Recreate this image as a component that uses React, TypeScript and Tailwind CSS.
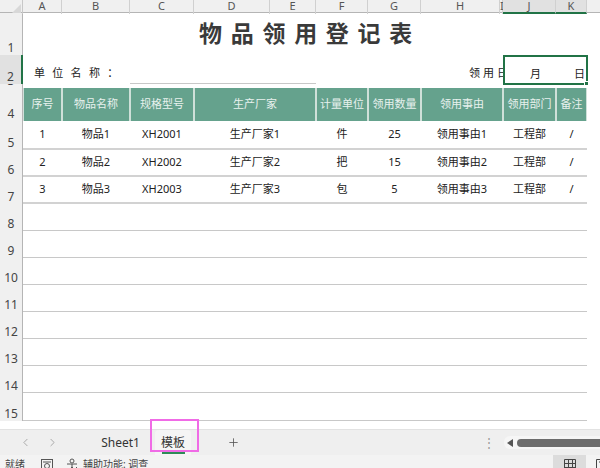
import { ChevronLeft, ChevronRight, Plus } from "lucide-react"

const cols = "grid grid-cols-[23px_39px_68px_64px_76px_46px_52px_53px_79px_3px_53px_31px_13px]"
const letters = ["A", "B", "C", "D", "E", "F", "G", "H", "I", "J", "K"]
const font = "font-['Noto_Sans','Noto_Sans_CJK_SC',sans-serif]"

const items = [
  ["1", "物品1", "XH2001", "生产厂家1", "件", "25", "领用事由1", "工程部", "/"],
  ["2", "物品2", "XH2002", "生产厂家2", "把", "15", "领用事由2", "工程部", "/"],
  ["3", "物品3", "XH2003", "生产厂家3", "包", "5", "领用事由3", "工程部", "/"],
]

const heads = [
  { label: "序号", span: "col-span-1" },
  { label: "物品名称", span: "col-span-1" },
  { label: "规格型号", span: "col-span-1" },
  { label: "生产厂家", span: "col-span-2" },
  { label: "计量单位", span: "col-span-1" },
  { label: "领用数量", span: "col-span-1" },
  { label: "领用事由", span: "col-span-2" },
  { label: "领用部门", span: "col-span-1" },
  { label: "备注", span: "col-span-1" },
]

function RowNum({ n, active }: { n?: number; active?: boolean }) {
  return (
    <div
      className={`flex items-end justify-center overflow-hidden border-r border-[#b5b5b5] text-[12px] leading-[15px] text-[#444] ${
        active ? "bg-[#e1e1e1] border-r-2 border-r-[#217346]" : "bg-[#f0f0f0]"
      }`}
    >
      {n}
    </div>
  )
}

function ItemRow({ n, row, h }: { n: number; row: string[]; h: string }) {
  return (
    <div className={`${cols} ${h}`}>
      <RowNum n={n} />
      <div className="col-span-11 grid grid-cols-[39px_68px_64px_122px_52px_53px_82px_53px_31px] border-b-2 border-[#d2d2d2] pb-[1px] items-center text-center text-[11px] text-[#222]">
        {row.map((v, i) => (
          <div key={i}>{v}</div>
        ))}
      </div>
    </div>
  )
}

function EmptyRow({ n, h }: { n: number; h: string }) {
  return (
    <div className={`${cols} ${h}`}>
      <RowNum n={n} />
      <div className="col-span-11 border-b border-[#c8c8c8]" />
    </div>
  )
}

export default function App() {
  return (
    <div className={`relative flex h-[468px] w-[600px] flex-col overflow-hidden bg-white ${font}`}>
      {/* column letters */}
      <div className={`${cols} h-[13px] border-b border-[#b5b5b5] bg-[#f0f0f0] text-[11px] leading-[12px] text-[#555]`}>
        <div className="relative border-r border-[#c8c8c8]">
          <div className="absolute bottom-px right-px h-0 w-0 border-b-[9px] border-l-[9px] border-b-[#d8d8d8] border-l-transparent" />
        </div>
        {letters.map((c) => (
          <div
            key={c}
            className={`border-r border-[#d0d0d0] text-center ${
              c === "J" || c === "K" ? "border-b-2 border-b-[#217346] bg-[#e1e1e1]" : ""
            }`}
          >
            {c}
          </div>
        ))}
      </div>

      {/* title */}
      <div className={`${cols} h-[42px]`}>
        <RowNum n={1} />
        <div className="col-span-11 flex items-center justify-center pb-[1px] pl-[10px] text-[23px] font-bold tracking-[8.7px] text-[#3a3a3a]">
          物品领用登记表
        </div>
      </div>

      {/* unit and date */}
      <div className={`${cols} h-[29px]`}>
        <RowNum n={2} active />
        <div className="col-span-2 flex items-center pl-[11px] pt-[8px] text-[11px] tracking-[7.3px] whitespace-nowrap text-[#222]">单位名称：</div>
        <div className="col-span-3 border-b border-[#c8c8c8]" />
        <div className="col-span-2" />
        <div className="col-span-2 flex items-center overflow-hidden pl-[48px] pt-[8px] text-[11px] tracking-[3px] whitespace-nowrap text-[#222]">领用日</div>
        <div className="col-span-3 grid grid-cols-[53px_31px] pt-[9px] text-[11px] text-[#222]">
          <div className="flex items-center justify-end pr-[15px]">月</div>
          <div className="flex items-center justify-end pr-[2px]">日</div>
        </div>
      </div>

      {/* row 3 */}
      <div className={`${cols} h-[4px]`}>
        <RowNum n={3} />
        <div className="col-span-11" />
      </div>

      {/* table head */}
      <div className={`${cols} h-[33px]`}>
        <RowNum n={4} />
        {heads.map((h) => (
          <div
            key={h.label}
            className={`${h.span} flex items-center justify-center border-r border-l border-[#cfe0d9] bg-[#65a28d] text-[11px] text-[#e8f1ee]`}
          >
            {h.label}
          </div>
        ))}
      </div>

      {items.map((row, i) => (
        <ItemRow key={i} n={i + 5} row={row} h={i === 0 ? "h-[29px]" : "h-[27px]"} />
      ))}
      {[8, 9, 10, 11, 12, 13, 14, 15].map((n) => (
        <EmptyRow key={n} n={n} h={n === 15 ? "h-[28px]" : "h-[27px]"} />
      ))}

      <div className="h-[8px] bg-white" />

      {/* sheet tabs */}
      <div className="flex h-[26px] items-center border-t border-[#e2e2e2] bg-[#efefef] text-[12px] text-[#444]">
        <div className="flex w-[84px] items-center gap-[14px] pl-[19px] text-[#9a9a9a]">
          <ChevronLeft size={13} strokeWidth={1.5} />
          <ChevronRight size={13} strokeWidth={1.5} />
        </div>
        <div className="flex w-[68px] justify-center pl-[5px] text-[12px] text-[#333]">Sheet1</div>
        <div className="ml-[3px] flex h-[25px] w-[36px] flex-col items-center justify-center rounded-t-[4px] bg-[#f5f5f5] text-[12px] text-[#333]">
          <span className="pt-[2px]">模板</span>
          <span className="h-[2px] w-[23px] bg-[#2e8b57]" />
        </div>
        <Plus size={13} strokeWidth={1.5} className="ml-[36px] text-[#555]" />
        <div className="ml-auto text-[12px] leading-none text-[#999]">⋮</div>
        <div className="ml-[9px] flex h-[13px] w-[96px] items-center gap-[4px] rounded-l-[6px] bg-[#f6f6f6] pl-[3px]">
          <span className="h-0 w-0 border-y-[4px] border-r-[6px] border-y-transparent border-r-[#555]" />
          <span className="h-[8px] flex-1 rounded-l-[4px] bg-[#6d6d6d]" />
        </div>
      </div>

      {/* status bar */}
      <div className="flex h-[13px] items-start overflow-hidden bg-[#f3f3f3] text-[10px] leading-[18px] text-[#444]">
        <span className="ml-[5px]">就绪</span>
        <svg width="14" height="13" viewBox="0 0 14 13" className="ml-[15px] mt-[4px]" fill="none" stroke="#555">
          <rect x="1.5" y="0.5" width="11" height="12" />
          <circle cx="7" cy="7" r="2.5" />
          <path d="M3 3h8" />
        </svg>
        <svg width="14" height="13" viewBox="0 0 14 13" className="ml-[12px] mt-[3px]" fill="none" stroke="#555">
          <circle cx="6" cy="3" r="2" />
          <path d="M1 6h10M6 6v3l-3 3M6 9l2 2M10 9l3 3" />
        </svg>
        <span className="ml-[3px]">辅助功能: 调查</span>
        <div className="ml-auto flex items-start gap-[10px] mr-[-6px]">
          <div className="flex h-[13px] w-[33px] justify-center bg-[#dcdcdc] pt-[4px]">
            <svg width="12" height="11" viewBox="0 0 12 11" fill="none" stroke="#444">
              <path d="M0.5 0.5h11v11h-11zM0.5 4.5h11M0.5 8.5h11M4.5 0.5v11M8.5 0.5v11" />
            </svg>
          </div>
          <svg width="10" height="11" viewBox="0 0 10 11" className="mt-[4px]" fill="none" stroke="#444">
            <path d="M0.5 0.5h9v11h-9zM3 3h4v8" />
          </svg>
        </div>
      </div>

      {/* selection box over J2:K2 */}
      <div className="absolute left-[503px] top-[55px] h-[30px] w-[85px] border-2 border-[#217346]">
        <div className="absolute -bottom-[3px] -right-[3px] h-[5px] w-[5px] border border-white bg-[#217346]" />
      </div>

      {/* annotation around the active tab */}
      <div className="absolute left-[150px] top-[419px] h-[33px] w-[49px] border-2 border-[#f06be6]" />
    </div>
  )
}
